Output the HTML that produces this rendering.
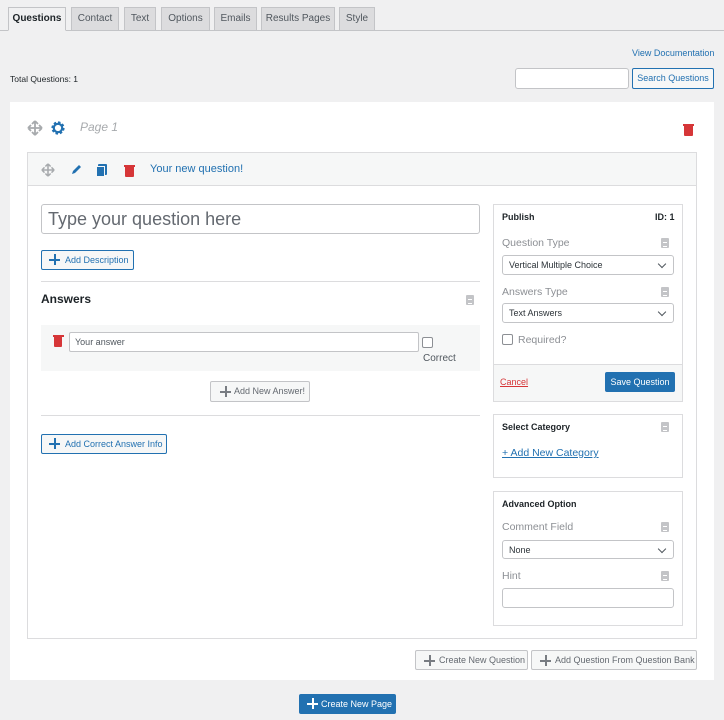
<!DOCTYPE html>
<html><head><meta charset="utf-8"><style>
*{box-sizing:border-box}
body{margin:0;width:724px;height:720px;background:#f0f0f1;font-family:"Liberation Sans",Arial,sans-serif;font-size:10px;color:#3c434a;position:relative;overflow:hidden}
.a{position:absolute}
.tab{position:absolute;top:7px;height:24px;border:1px solid #c3c4c7;background:#dcdcde;color:#50575e;font-size:10px;line-height:22px;text-align:center}
.tab.on{background:#f0f0f1;border-bottom-color:#f0f0f1;color:#1d2327;font-weight:bold}
.inp{position:absolute;background:#fff;border:1px solid #c3c4c7;border-radius:3px}
.btn{position:absolute;border:1px solid #c3c4c7;background:#f6f7f7;border-radius:2px;color:#646970;font-size:9px;line-height:18px;text-align:center}
.gb{text-align:left;padding-left:23px}
.obtn{position:absolute;border:1px solid #2271b1;background:#f6f7f7;border-radius:2px;color:#2271b1;font-size:9px;line-height:18px;padding-left:23px}
.pl{position:absolute;width:11px;height:11px}
.pl:before{content:"";position:absolute;left:0;top:4.5px;width:11px;height:2px;background:currentColor}
.pl:after{content:"";position:absolute;top:0;left:4.5px;height:11px;width:2px;background:currentColor}
.sel{position:absolute;background:#fff;border:1px solid #c3c4c7;border-radius:3px;font-size:9px;color:#2c3338;line-height:18px;padding-left:6px}
.sel:after{content:"";position:absolute;right:8px;top:5px;width:5px;height:5px;border-right:1.2px solid #50575e;border-bottom:1.2px solid #50575e;transform:rotate(45deg)}
.doc{position:absolute;width:8px;height:10px;background:#c3c4c7;border-radius:1px}
.doc:after{content:"";position:absolute;left:2px;top:4px;width:4px;height:3px;border-top:1px solid #fff;border-bottom:1px solid #fff}
.lbl{position:absolute;font-size:10.5px;color:#8c8f94}
.trash{position:absolute;width:9px;height:10px;background:#d63638;border-radius:0 0 1px 1px}
.trash:before{content:"";position:absolute;left:-1px;top:-2px;width:11px;height:2px;background:#d63638}
</style></head><body>
<div class="a" style="left:0;top:30px;width:724px;border-top:1px solid #c3c4c7"></div>
<div class="tab on" style="left:8px;width:58px">Questions</div>
<div class="tab" style="left:71px;width:48px">Contact</div>
<div class="tab" style="left:124px;width:32px">Text</div>
<div class="tab" style="left:161px;width:49px">Options</div>
<div class="tab" style="left:214px;width:43px">Emails</div>
<div class="tab" style="left:261px;width:74px">Results Pages</div>
<div class="tab" style="left:339px;width:36px">Style</div>

<div class="a" style="left:632px;top:48px;color:#2271b1;font-size:9px">View Documentation</div>
<div class="a" style="left:10px;top:74px;font-size:8.5px;color:#1d2327">Total Questions: 1</div>
<div class="inp" style="left:515px;top:68px;width:114px;height:21px"></div>
<div class="btn" style="left:632px;top:68px;width:82px;height:21px;border-color:#2271b1;color:#2271b1;line-height:19px">Search Questions</div>

<div class="a" style="left:10px;top:102px;width:704px;height:578px;background:#fff"></div>
<svg class="a" style="left:27px;top:120px" width="16" height="16" viewBox="0 0 16 16"><path d="M8 1v14M1 8h14M8 1l-3 3M8 1l3 3M8 15l-3-3M8 15l3-3M1 8l3-3M1 8l3 3M15 8l-3-3M15 8l-3 3" stroke="#a7aaad" stroke-width="1.8" fill="none"/></svg>
<svg class="a" style="left:50px;top:120px" width="16" height="16" viewBox="0 0 16 16"><circle cx="8" cy="8" r="5" fill="none" stroke="#2271b1" stroke-width="3.2" stroke-dasharray="2.2 1.7"/><circle cx="8" cy="8" r="4.2" fill="none" stroke="#2271b1" stroke-width="2.2"/></svg>
<div class="a" style="left:80px;top:120px;font-size:12px;font-style:italic;color:#a7aaad">Page 1</div>
<div class="trash" style="left:684px;top:126px"></div>

<div class="a" style="left:27px;top:152px;width:670px;height:487px;border:1px solid #dcdcde;background:#fff"></div>
<div class="a" style="left:28px;top:153px;width:668px;height:33px;background:#f6f7f7;border-bottom:1px solid #dcdcde"></div>
<svg class="a" style="left:41px;top:163px" width="14" height="14" viewBox="0 0 16 16"><path d="M8 1v14M1 8h14M8 1l-3 3M8 1l3 3M8 15l-3-3M8 15l3-3M1 8l3-3M1 8l3 3M15 8l-3-3M15 8l-3 3" stroke="#a7aaad" stroke-width="1.8" fill="none"/></svg>
<svg class="a" style="left:70px;top:164px" width="12" height="12" viewBox="0 0 12 12"><path d="M2 10l1-3 6-6 2 2-6 6z" fill="#2271b1"/></svg>
<div class="a" style="left:98px;top:164px;width:9px;height:11px;background:#2271b1;border-radius:1px"></div>
<div class="a" style="left:96px;top:166px;width:9px;height:11px;background:#2271b1;border:1px solid #f6f7f7"></div>
<div class="trash" style="left:125px;top:167px"></div>
<div class="a" style="left:150px;top:163px;font-size:11px;color:#2271b1">Your new question!</div>

<div class="inp" style="left:41px;top:204px;width:439px;height:30px;font-size:18px;color:#646970;line-height:28px;padding-left:6px">Type your question here</div>
<div class="obtn" style="left:41px;top:250px;width:93px;height:20px"><span class="pl" style="left:7px;top:3px"></span>Add Description</div>
<div class="a" style="left:41px;top:281px;width:439px;border-top:1px solid #dcdcde"></div>
<div class="a" style="left:41px;top:292px;font-size:12px;font-weight:bold;color:#1d2327">Answers</div>
<div class="doc" style="left:466px;top:295px"></div>
<div class="a" style="left:41px;top:325px;width:439px;height:46px;background:#f6f7f7"></div>
<div class="trash" style="left:54px;top:337px;width:8px"></div>
<div class="inp" style="left:69px;top:332px;width:350px;height:20px;font-size:9px;line-height:18px;padding-left:5px;color:#50575e;border-radius:2px">Your answer</div>
<div class="a" style="left:422px;top:337px;width:11px;height:11px;border:1px solid #8c8f94;border-radius:2px;background:#fff"></div>
<div class="a" style="left:423px;top:353px;font-size:10px;color:#50575e">Correct</div>
<div class="btn gb" style="left:210px;top:381px;width:100px;height:21px;line-height:19px"><span class="pl" style="left:9px;top:4px;color:#787c82"></span>Add New Answer!</div>
<div class="a" style="left:41px;top:415px;width:439px;border-top:1px solid #dcdcde"></div>
<div class="obtn" style="left:41px;top:434px;width:126px;height:20px"><span class="pl" style="left:7px;top:3px"></span>Add Correct Answer Info</div>

<div class="a" style="left:493px;top:204px;width:190px;height:198px;border:1px solid #dcdcde;background:#fff"></div>
<div class="a" style="left:502px;top:212px;font-size:9px;font-weight:bold;color:#1d2327">Publish</div>
<div class="a" style="left:655px;top:212px;font-size:9px;font-weight:bold;color:#1d2327">ID: 1</div>
<div class="lbl" style="left:502px;top:237px">Question Type</div><div class="doc" style="left:661px;top:238px"></div>
<div class="sel" style="left:502px;top:255px;width:172px;height:20px">Vertical Multiple Choice</div>
<div class="lbl" style="left:502px;top:286px">Answers Type</div><div class="doc" style="left:661px;top:287px"></div>
<div class="sel" style="left:502px;top:303px;width:172px;height:20px">Text Answers</div>
<div class="a" style="left:502px;top:334px;width:11px;height:11px;border:1px solid #8c8f94;border-radius:2px"></div>
<div class="lbl" style="left:518px;top:334px">Required?</div>
<div class="a" style="left:494px;top:364px;width:188px;height:37px;background:#f6f7f7;border-top:1px solid #dcdcde"></div>
<div class="a" style="left:500px;top:377px;font-size:9px;color:#d63638;text-decoration:underline">Cancel</div>
<div class="a" style="left:605px;top:372px;width:70px;height:20px;background:#2271b1;border-radius:2px;color:#fff;font-size:9px;line-height:20px;text-align:center">Save Question</div>

<div class="a" style="left:493px;top:414px;width:190px;height:64px;border:1px solid #dcdcde;background:#fff"></div>
<div class="a" style="left:502px;top:422px;font-size:9px;font-weight:bold;color:#1d2327">Select Category</div>
<div class="doc" style="left:661px;top:422px"></div>
<div class="a" style="left:502px;top:447px;font-size:10.5px;color:#2271b1;text-decoration:underline">+ Add New Category</div>

<div class="a" style="left:493px;top:491px;width:190px;height:135px;border:1px solid #dcdcde;background:#fff"></div>
<div class="a" style="left:502px;top:499px;font-size:9px;font-weight:bold;color:#1d2327">Advanced Option</div>
<div class="lbl" style="left:502px;top:521px">Comment Field</div><div class="doc" style="left:661px;top:522px"></div>
<div class="sel" style="left:502px;top:540px;width:172px;height:19px">None</div>
<div class="lbl" style="left:502px;top:570px">Hint</div><div class="doc" style="left:661px;top:571px"></div>
<div class="inp" style="left:502px;top:588px;width:172px;height:20px"></div>

<div class="btn gb" style="left:415px;top:650px;width:113px;height:20px"><span class="pl" style="left:8px;top:4px;color:#787c82"></span>Create New Question</div>
<div class="btn gb" style="left:531px;top:650px;width:166px;height:20px"><span class="pl" style="left:8px;top:4px;color:#787c82"></span>Add Question From Question Bank</div>

<div class="a" style="left:299px;top:694px;width:97px;height:20px;background:#2271b1;border-radius:2px;color:#fff;font-size:9px;line-height:20px;padding-left:22px"><span class="pl" style="left:8px;top:4px;color:#fff"></span>Create New Page</div>
</body></html>
